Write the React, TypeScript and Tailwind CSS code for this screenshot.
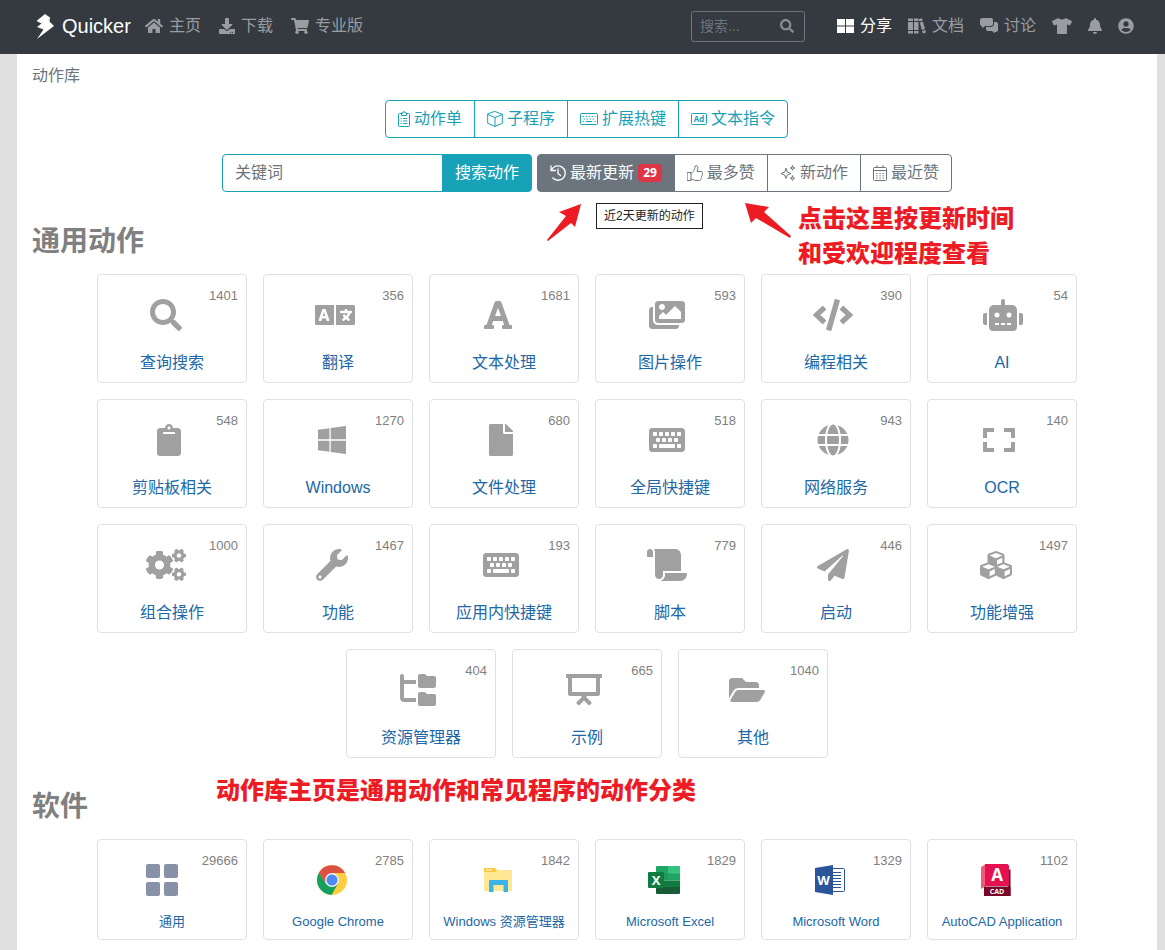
import React, { useState } from 'react';
import type { ReactNode } from 'react';
import {
  FaBell, FaClipboard, FaCode, FaCogs, FaCubes, FaDownload, FaFile, FaFolderOpen, FaFont, FaGlobe, FaHome, FaImages,
  FaKeyboard, FaLanguage, FaPaperPlane, FaRobot, FaScroll, FaSearch, FaShoppingCart, FaTshirt, FaUserCircle, FaWindows, FaWrench,
} from 'react-icons/fa';
import { FaFolderTree } from 'react-icons/fa6';

type CardItem = { name: string; count: number; icon: ReactNode };

/* ---------- solid icons ---------- */

const BoltLogo = () => (
  <svg viewBox="0 0 18 25" className="w-[18px] h-[25px]" fill="#fff" aria-hidden="true">
    <path d="M9 0 14 3.500 13.500 7.500 18 12 1 25 7.500 15.500 1 13 5.500 9.500.5 7z" />
  </svg>
);

const TilesIcon = () => (
  <svg viewBox="0 0 17 14" className="w-[17px] h-[14px]" fill="currentColor" aria-hidden="true">
    <path d="M0 0h8v6.500H0zM9 0h8v6.500H9zM0 7.500h8V14H0zM9 7.500h8V14H9z" />
  </svg>
);

const BooksIcon = () => (
  <svg viewBox="0 0 18 16" className="w-[18px] h-4" fill="currentColor" aria-hidden="true">
    <path d="M0 .5h5V3H0zM0 4h5v8H0zM0 13h5v2.500H0zM6 .5h4.500V3H6zM6 4h4.500v8H6zM6 13h4.500v2.500H6z" />
    <path d="M10.800 1.200 14 .3l.7 2.400-3.200.9zM11.800 4.600l3.200-.9 2 7.300-3.200.9zM14.100 12.900l3.200-.9.7 2.600-3.200.9z" />
  </svg>
);

const CommentsIcon = () => (
  <svg viewBox="0 0 576 512" className="w-[18px] h-4" fill="currentColor" aria-hidden="true">
    <path d="M416 192V64c0-35.300-28.700-64-64-64H64C28.700 0 0 28.700 0 64v128c0 35.300 28.700 64 64 64v54.200c0 8 9.100 12.600 15.500 7.800l82.800-62.100H352c35.300.1 64-28.600 64-63.900zm96-64h-64v64c0 52.900-43.100 96-96 96H192v64c0 35.300 28.700 64 64 64h125.700l82.800 62.100c6.400 4.800 15.500.2 15.500-7.800V448h32c35.300 0 64-28.700 64-64V192c0-35.300-28.700-64-64-64z" />
  </svg>
);

const ExpandIcon = () => (
  <svg viewBox="0 0 32 24" className="w-8 h-6" fill="currentColor" aria-hidden="true">
    <path d="M1 0h10v4H4v6H0V1a1 1 0 0 1 1-1zM21 0h10a1 1 0 0 1 1 1v9h-4V4h-7zM0 14h4v6h7v4H1a1 1 0 0 1-1-1zM28 14h4v9a1 1 0 0 1-1 1H21v-4h7z" />
  </svg>
);

const PresentationIcon = () => (
  <svg viewBox="0 0 36 32" className="w-9 h-8" fill="currentColor" aria-hidden="true">
    <path d="M1 0h34a1 1 0 0 1 1 1v2a1 1 0 0 1-1 1h-1v16a2 2 0 0 1-2 2H20.500v1.500l4.800 4.600a1 1 0 0 1 0 1.400l-1.400 1.400a1 1 0 0 1-1.400 0L18 26.500l-4.500 4.400a1 1 0 0 1-1.400 0l-1.400-1.400a1 1 0 0 1 0-1.400l4.800-4.600V22H4a2 2 0 0 1-2-2V4H1a1 1 0 0 1-1-1V1a1 1 0 0 1 1-1zm5 4v14h24V4z" />
  </svg>
);

/* ---------- thin outline icons ---------- */

const Thin = ({ className, box, children }: { className: string; box: string; children: ReactNode }) => (
  <svg viewBox={box} className={className} fill="none" stroke="currentColor" strokeLinejoin="round" strokeLinecap="round" aria-hidden="true">
    {children}
  </svg>
);

const ClipboardList = () => (
  <Thin box="0 0 12 16" className="w-3 h-4">
    <path d="M3.500 2.500h-2a1 1 0 0 0-1 1v11a1 1 0 0 0 1 1h9a1 1 0 0 0 1-1v-11a1 1 0 0 0-1-1h-2M3.500 2v2.500h5V2H7.300a1.300 1.300 0 0 0-2.600 0zM5.500 7.500h3.500M5.500 10h3.500M5.500 12.500h3.500M3 7.500h.3M3 10h.3M3 12.500h.3" />
  </Thin>
);

const CubeIcon = () => (
  <Thin box="0 0 16 16" className="w-4 h-4">
    <path d="M8 .5 15.300 3.300v9L8 15.500.7 12.300v-9zM.7 3.500 8 6.500l7.300-3M8 6.500v9" />
  </Thin>
);

const KeyboardIcon = () => (
  <Thin box="0 0 18 16" className="w-[18px] h-4">
    <rect x=".5" y="2.500" width="17" height="11" rx="1" />
    <path d="M3 5.500h.6M6 5.500h.6M9 5.500h.6M12 5.500h.6M15 5.500h.3M4 8h.6M7 8h.6M10 8h.6M13 8h.6M3 10.500h.6M6 10.500h6M15 10.500h.3" />
  </Thin>
);

const AdIcon = () => (
  <svg viewBox="0 0 16 16" className="w-4 h-4" aria-hidden="true">
    <rect x=".5" y="2.500" width="15" height="11" rx="1" fill="none" stroke="currentColor" />
    <text x="8" y="11" textAnchor="middle" fontSize="8" fontWeight="700" fontFamily="Open Sans" fill="currentColor">Ad</text>
  </svg>
);

const HistoryIcon = () => (
  <Thin box="0 0 16 16" className="w-4 h-4">
    <path strokeWidth="1.300" d="M1 1v4.500h4.500M1.400 5.200A7.200 7.200 0 1 1 2.800 13M8 4v4.500l2.500 2" />
  </Thin>
);

const ThumbIcon = () => (
  <Thin box="0 0 16 16" className="w-4 h-4">
    <path d="M.5 7.500H4v8H.5zM4 8.500c2-1 2.500-2.800 3.300-4C8 3.500 7.800.5 9 .5c2 0 2 2 1.700 3.300L10 6.500h4c1.500 0 2 1.500 1 2.500.6 1 .3 2-.5 2.500.3 1 0 1.700-.7 2.200 0 1.300-.7 1.800-1.800 1.800H9c-2 0-3-1.300-5-1.300" />
  </Thin>
);

const SparklesIcon = () => (
  <Thin box="0 0 16 16" className="w-4 h-4">
    <path d="M6 3.500 7.400 7l3.600 1.500-3.600 1.500L6 13.500 4.600 10 1 8.500 4.600 7zM12.500.8l.6 1.600 1.600.6-1.600.6-.6 1.600-.6-1.600-1.600-.6 1.600-.6zM12.500 11l.6 1.600 1.600.6-1.600.6-.6 1.600-.6-1.600-1.600-.6 1.600-.6z" />
  </Thin>
);

const CalendarIcon = () => (
  <Thin box="0 0 14 16" className="w-[14px] h-4">
    <path d="M1.500 2.500h11a1 1 0 0 1 1 1v11a1 1 0 0 1-1 1h-11a1 1 0 0 1-1-1v-11a1 1 0 0 1 1-1zM.5 5.500h13M4 .5v2M10 .5v2M3.500 8.500h.5M6.800 8.500h.5M10 8.500h.5M3.500 10.800h.5M6.800 10.800h.5M10 10.800h.5M3.500 13h.5M6.800 13h.5M10 13h.5" />
  </Thin>
);

/* ---------- program logos ---------- */

const TilesLogo = () => (
  <svg viewBox="0 0 32 32" className="w-8 h-8" fill="#8792a8" aria-hidden="true">
    <rect width="14" height="14" rx="2" />
    <rect x="18" width="14" height="14" rx="2" />
    <rect y="18" width="14" height="14" rx="2" />
    <rect x="18" y="18" width="14" height="14" rx="2" />
  </svg>
);

const ChromeLogo = () => (
  <svg viewBox="0 0 32 32" className="w-8 h-8" aria-hidden="true">
    <circle cx="16" cy="16" r="15" fill="#ffcd40" />
    <path d="M3 8.500A15 15 0 0 0 15.500 31L22.100 19.500 16 16 9.900 19.500z" fill="#16a05d" />
    <path d="M3 8.500A15 15 0 0 1 29 9H16L9.900 19.500z" fill="#dd5144" />
    <circle cx="16" cy="16" r="7" fill="#f1f1f1" />
    <circle cx="16" cy="16" r="5.500" fill="#4c8bf5" />
  </svg>
);

const ExplorerLogo = () => (
  <svg viewBox="0 0 32 32" className="w-8 h-8" aria-hidden="true">
    <path d="M2 4h11l2 2v3H2z" fill="#fcc93c" />
    <path d="M4 5.500h6v1H4z" fill="#fff" />
    <path d="M2 8h12l1-2h15v20a1 1 0 0 1-1 1H3a1 1 0 0 1-1-1z" fill="#ffe793" />
    <path d="M7 17a1 1 0 0 1 1-1h17a1 1 0 0 1 1 1v11h-4.500v-7h-10v7H7z" fill="#3ab3e8" />
  </svg>
);

const ExcelLogo = () => (
  <svg viewBox="0 0 32 32" className="w-8 h-8" aria-hidden="true">
    <path d="M8 3a1 1 0 0 1 1-1h11v8H8z" fill="#21a366" />
    <path d="M20 2h11a1 1 0 0 1 1 1v7H20z" fill="#33c481" />
    <path d="M8 9.500h12v7H8z" fill="#1f9b60" />
    <path d="M20 9.500h12v7H20z" fill="#21a366" />
    <path d="M8 16.500h24V23H8z" fill="#107c41" />
    <path d="M8 23h24v6a1 1 0 0 1-1 1H9a1 1 0 0 1-1-1z" fill="#185c37" />
    <rect y="8" width="16" height="16" rx="1" fill="#107c41" />
    <text x="8" y="20.500" textAnchor="middle" fontSize="13" fontWeight="700" fontFamily="Open Sans" fill="#fff">X</text>
  </svg>
);

const WordLogo = () => (
  <svg viewBox="0 0 32 32" className="w-8 h-8" aria-hidden="true">
    <rect x="17" y="4.500" width="13.500" height="23" rx="1" fill="#fff" stroke="#2a5699" />
    <path d="M19 8.500h8M19 11.500h8M19 14.500h8M19 17.500h8M19 20.500h8M19 23.500h8" stroke="#2a5699" />
    <path d="M1 4 19 1v30L1 28z" fill="#2a5699" />
    <text x="9.500" y="20.500" textAnchor="middle" fontSize="13" fontWeight="700" fontFamily="Open Sans" fill="#fff">W</text>
  </svg>
);

const AutocadLogo = () => (
  <svg viewBox="0 0 32 32" className="w-8 h-8" aria-hidden="true">
    <path d="M28 5.500h2.500V32H28z" fill="#6a0a22" />
    <path d="M1 3 6 0v22l-5 3z" fill="#ef5b7d" />
    <path d="M5 0h22.500L29 1.500V22H5z" fill="#e51050" />
    <path d="M4 22.500h26.500V32H4z" fill="#790627" />
    <text x="17" y="17" textAnchor="middle" fontSize="17" fontWeight="700" fontFamily="Open Sans" fill="#fff">A</text>
    <text x="17" y="29.500" textAnchor="middle" fontSize="7" fontWeight="700" fontFamily="Open Sans" fill="#fff">CAD</text>
  </svg>
);

/* ---------- data ---------- */

const generalActions: CardItem[] = [
  { name: '查询搜索', count: 1401, icon: <FaSearch className="w-8 h-8" /> },
  { name: '翻译', count: 356, icon: <FaLanguage className="w-10 h-8" /> },
  { name: '文本处理', count: 1681, icon: <FaFont className="w-7 h-8" /> },
  { name: '图片操作', count: 593, icon: <FaImages className="w-9 h-8" /> },
  { name: '编程相关', count: 390, icon: <FaCode className="w-10 h-8" /> },
  { name: 'AI', count: 54, icon: <FaRobot className="w-10 h-8" /> },
  { name: '剪贴板相关', count: 548, icon: <FaClipboard className="w-6 h-8" /> },
  { name: 'Windows', count: 1270, icon: <FaWindows className="w-7 h-8" /> },
  { name: '文件处理', count: 680, icon: <FaFile className="w-6 h-8" /> },
  { name: '全局快捷键', count: 518, icon: <FaKeyboard className="w-9 h-8" /> },
  { name: '网络服务', count: 943, icon: <FaGlobe className="w-8 h-8" /> },
  { name: 'OCR', count: 140, icon: <ExpandIcon /> },
  { name: '组合操作', count: 1000, icon: <FaCogs className="w-10 h-8" /> },
  { name: '功能', count: 1467, icon: <FaWrench className="w-8 h-8" /> },
  { name: '应用内快捷键', count: 193, icon: <FaKeyboard className="w-9 h-8" /> },
  { name: '脚本', count: 779, icon: <FaScroll className="w-10 h-8" /> },
  { name: '启动', count: 446, icon: <FaPaperPlane className="w-8 h-8" /> },
  { name: '功能增强', count: 1497, icon: <FaCubes className="w-8 h-8" /> },
  { name: '资源管理器', count: 404, icon: <FaFolderTree className="w-9 h-8" /> },
  { name: '示例', count: 665, icon: <PresentationIcon /> },
  { name: '其他', count: 1040, icon: <FaFolderOpen className="w-9 h-8" /> },
];

const software: CardItem[] = [
  { name: '通用', count: 29666, icon: <TilesLogo /> },
  { name: 'Google Chrome', count: 2785, icon: <ChromeLogo /> },
  { name: 'Windows 资源管理器', count: 1842, icon: <ExplorerLogo /> },
  { name: 'Microsoft Excel', count: 1829, icon: <ExcelLogo /> },
  { name: 'Microsoft Word', count: 1329, icon: <WordLogo /> },
  { name: 'AutoCAD Application', count: 1102, icon: <AutocadLogo /> },
];

const libraryLinks = [
  { name: '动作单', icon: <ClipboardList /> },
  { name: '子程序', icon: <CubeIcon /> },
  { name: '扩展热键', icon: <KeyboardIcon /> },
  { name: '文本指令', icon: <AdIcon /> },
];

const sortLinks = [
  { name: '最新更新', icon: <HistoryIcon />, badge: 29, tip: '近2天更新的动作' },
  { name: '最多赞', icon: <ThumbIcon /> },
  { name: '新动作', icon: <SparklesIcon /> },
  { name: '最近赞', icon: <CalendarIcon /> },
];

/* ---------- components ---------- */

const NavLink = ({ icon, label, text, active }: { icon: ReactNode; label?: string; text?: string; active?: boolean }) => (
  <a href="#" aria-label={label} className={`flex items-center gap-1.5 ${active ? 'text-white' : 'text-[#9a9da0]'}`}>
    {icon}
    {text && <span>{text}</span>}
  </a>
);

const ActionCard = ({ item, small }: { item: CardItem; small?: boolean }) => (
  <a href="#" className="w-[150px] border border-[#dee2e6] rounded pt-3 pb-[7px] block">
    <div className="h-14 pl-6 pr-2 flex">
      <div className="flex-1 flex items-center justify-center text-[#a0a0a0]">{item.icon}</div>
      <span className="text-[13px] leading-[18px] text-[#808080]">{item.count}</span>
    </div>
    <div className={`text-center whitespace-nowrap text-[#2067a8] ${small ? 'mt-1 text-[13px] leading-5' : 'mt-2 text-base leading-6'}`}>{item.name}</div>
  </a>
);

export default function App() {
  const [keyword, setKeyword] = useState('');
  const [search, setSearch] = useState('');

  return (
    <div className="min-h-screen bg-[#e0e0e0] text-base leading-6 font-['Liberation_Sans','Noto_Sans_CJK_SC',sans-serif]">
      <header className="bg-[#343a40] pl-[17px] pr-2">
        <div className="max-w-[1140px] mx-auto h-[54px] pl-[19px] pr-[23px] pb-0.5 flex items-center justify-between">
          <nav className="flex items-center gap-[18px] whitespace-nowrap">
            <a href="#" className="flex items-center gap-2 text-xl text-white -mr-1">
              <BoltLogo />
              Quicker
            </a>
            <NavLink icon={<FaHome className="w-[18px] h-4" />} text="主页" />
            <NavLink icon={<FaDownload className="w-4 h-4" />} text="下载" />
            <NavLink icon={<FaShoppingCart className="w-[18px] h-4" />} text="专业版" />
          </nav>
          <div className="flex items-center gap-4 whitespace-nowrap">
            <form className="w-[114px] h-[31px] mr-4 border border-[#6c757d] rounded-[3px] flex items-center pl-2 pr-2.5 text-[#6c757d]" onSubmit={e => e.preventDefault()}>
              <input aria-label="搜索" value={search} onChange={e => setSearch(e.target.value)} placeholder="搜索..." className="flex-1 min-w-0 text-sm bg-transparent outline-none placeholder:text-[#6c757d]" />
              <button type="submit" aria-label="提交搜索"><FaSearch className="w-3.5 h-3.5 text-[#868c92]" /></button>
            </form>
            <NavLink icon={<TilesIcon />} text="分享" active />
            <NavLink icon={<BooksIcon />} text="文档" />
            <NavLink icon={<CommentsIcon />} text="讨论" />
            <NavLink icon={<FaTshirt className="w-5 h-4" />} label="外观" />
            <NavLink icon={<FaBell className="w-3.5 h-4" />} label="通知" />
            <NavLink icon={<FaUserCircle className="w-4 h-4" />} label="账户" />
          </div>
        </div>
      </header>

      <div className="pl-[17px] pr-2">
        <main className="relative max-w-[1140px] min-h-[896px] mx-auto bg-white px-[15px] pt-2.5 pb-4">
          <div className="pb-3 text-[#6c757d]">动作库</div>

          <div className="flex justify-center">
            {libraryLinks.map((link) => (
              <a key={link.name} href="#" className="h-[38px] px-3 -ml-px border border-[#17a2b8] text-[#17a2b8] flex items-center gap-1 first:rounded-l last:rounded-r">
                {link.icon}
                {link.name}
              </a>
            ))}
          </div>

          <div className="mt-4 flex flex-wrap justify-center gap-[5px]">
            <form className="flex" onSubmit={e => e.preventDefault()}>
              <input aria-label="关键词" value={keyword} onChange={e => setKeyword(e.target.value)} placeholder="关键词" className="w-[221px] h-[38px] px-3 border border-[#17a2b8] rounded-l outline-none placeholder:text-[#6c757d]" />
              <button type="submit" className="h-[38px] px-3 -ml-px border border-[#17a2b8] bg-[#17a2b8] text-white rounded-r">搜索动作</button>
            </form>
            <div className="flex">
              {sortLinks.map((link) => (
                <a key={link.name} href="#" className={`relative h-[38px] px-3 -ml-px first:ml-0 border border-[#6c757d] flex items-center gap-1 first:rounded-l last:rounded-r ${link.badge ? 'bg-[#6c757d] text-white' : 'text-[#6c757d]'}`}>
                  {link.icon}
                  {link.name}
                  {link.badge && <span className="px-[5px] rounded bg-[#dc3545] text-white text-xs leading-[18px] font-bold font-['Open_Sans',sans-serif]">{link.badge}</span>}
                  {link.tip && <span role="tooltip" className="absolute left-[58px] top-12 h-[26px] px-[7px] border border-[#222] bg-white text-[#222] text-xs leading-6 whitespace-nowrap">{link.tip}</span>}
                </a>
              ))}
            </div>
          </div>

          {/* hand-drawn notes over the page */}
          <svg viewBox="0 0 34 37" className="absolute left-[530px] top-[150px] w-[34px] h-[37px]" fill="#ed1c24" aria-hidden="true">
            <path d="M34 0 12 8l7 4L0 36l1 1 23-18 4 4z" />
          </svg>
          <svg viewBox="0 0 46 35" className="absolute left-[728px] top-[149px] w-[46px] h-[35px]" fill="#ed1c24" aria-hidden="true">
            <path d="M0 0 6 20l5-5 34 20 1-2L19 9l5-5z" />
          </svg>
          <p className="absolute left-[781px] top-[147px] text-2xl leading-[35px] font-black text-[#ed1c24]">
            点击这里按更新时间
            <br />
            和受欢迎程度查看
          </p>
          <p className="absolute left-[199px] top-[719px] text-2xl leading-[35px] font-black text-[#ed1c24] whitespace-nowrap">
            动作库主页是通用动作和常见程序的动作分类
          </p>

          <section className="mt-8">
            <h2 className="text-[28px] leading-9 font-bold text-[#808080]">通用动作</h2>
            <div className="mt-3.5 flex flex-wrap justify-center gap-4">
              {generalActions.map((item) => <ActionCard key={item.name} item={item} />)}
            </div>
          </section>

          <section className="mt-[31px]">
            <h2 className="text-[28px] leading-9 font-bold text-[#808080]">软件</h2>
            <div className="mt-3.5 flex flex-wrap justify-center gap-4">
              {software.map((item) => <ActionCard key={item.name} item={item} small />)}
            </div>
          </section>
        </main>
      </div>
    </div>
  );
}
